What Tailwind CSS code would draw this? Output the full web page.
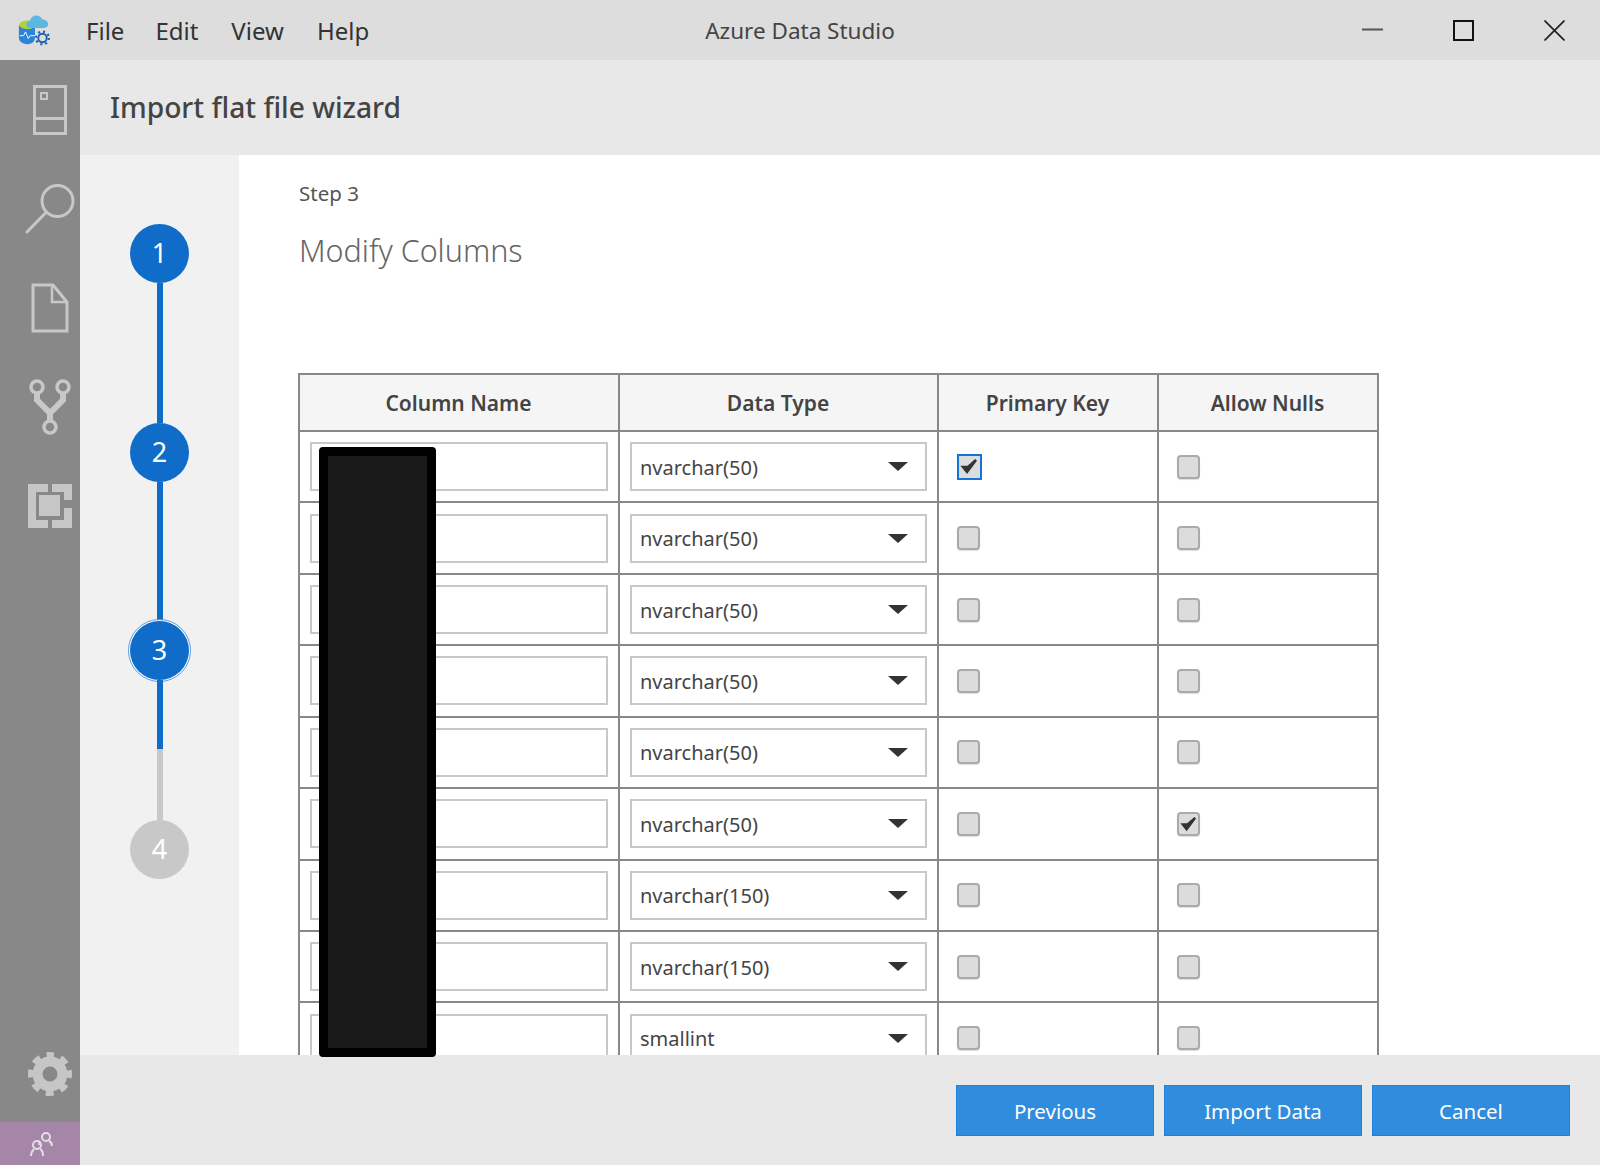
<!DOCTYPE html>
<html lang="en">
<head>
<meta charset="utf-8">
<title>Azure Data Studio</title>
<script src="https://cdn.jsdelivr.net/npm/@tailwindcss/browser@4"></script>
</head>
<body class="m-0 overflow-hidden">
<div class="relative w-[1600px] h-[1165px] flex flex-col overflow-hidden bg-white text-[#444] font-['Noto_Sans',sans-serif]">
  <!-- Title bar -->
  <header class="h-[60px] shrink-0 bg-[#dddddd] flex items-center relative">
    <div class="w-[80px] shrink-0 flex justify-center pr-[12px]">
      <svg width="34" height="36" viewBox="0 0 36 36">
        <path d="M2 14c0-4 4-6 9-6 3 0 5 1 7 2v8H2z" fill="#b4d334"/>
        <path d="M2 13c2 3 5 4 9 4 3 0 6-1 8-3v12c0 5-4 7-8 7s-9-2-9-7z" fill="#2a84d8"/>
        <path d="M3 24h4l2-4 3 7 2-3h5" fill="none" stroke="#fff" stroke-width="1"/>
        <path d="M10 13c-1-3 2-5 4-5 1-4 5-6 8-5 2 0 4 2 5 4 3 0 6 2 6 5s-3 4-6 4H14c-2 0-4-1-4-3z" fill="#5cb8e0"/>
        <circle cx="27" cy="26.5" r="4.5" fill="none" stroke="#1b5fb0" stroke-width="2"/>
        <circle cx="27" cy="26.5" r="6.8" fill="none" stroke="#1b5fb0" stroke-width="2.2" stroke-dasharray="2.2 3.1"/>
      </svg>
    </div>
    <nav class="flex text-[24px] text-[#333] gap-[33px] ml-[6px] pt-[2px]">
      <span class="-mr-[2px]">File</span><span>Edit</span><span>View</span><span>Help</span>
    </nav>
    <div class="absolute left-0 right-0 top-0 h-full pt-[2px] flex items-center justify-center text-[22.5px] text-[#444] pointer-events-none">Azure Data Studio</div>
    <div class="ml-auto flex items-center h-full gap-[70px] pr-[35px] pb-[0px]">
      <svg width="21" height="21" viewBox="0 0 21 21"><path d="M0 9.5h21" stroke="#555" stroke-width="2"/></svg>
      <svg width="21" height="21" viewBox="0 0 21 21"><rect x="1" y="1" width="19" height="19" fill="none" stroke="#111" stroke-width="2"/></svg>
      <svg width="21" height="21" viewBox="0 0 21 21"><path d="M0.5 0.5l20 20M20.5 0.5l-20 20" stroke="#222" stroke-width="1.7"/></svg>
    </div>
  </header>

  <div class="flex-1 flex min-h-0">
    <!-- Activity bar -->
    <aside class="w-[80px] shrink-0 bg-[#888888] flex flex-col">
      <div class="h-[99px] flex items-center justify-center pl-[19px]">
        <svg width="34" height="50" viewBox="0 0 34 50" fill="none" stroke="#c8c8c8" stroke-width="3"><rect x="1.5" y="1.5" width="31" height="47"/><path d="M1.5 33.5h31"/><rect x="8" y="8" width="6" height="6" stroke-width="2"/></svg>
      </div>
      <div class="h-[99px] flex items-center justify-center pl-[19px]">
        <svg width="50" height="50" viewBox="0 0 50 50" fill="none" stroke="#c8c8c8" stroke-width="3"><circle cx="32.5" cy="17" r="15.5"/><path d="M21.5 28L2 48" stroke-linecap="round"/></svg>
      </div>
      <div class="h-[99px] flex items-center justify-center pl-[19px]">
        <svg width="38" height="50" viewBox="0 0 38 50" fill="none" stroke="#c8c8c8" stroke-width="3"><path d="M2 2h20l14 17v29H2z"/><path d="M21 2v17h15" stroke-width="2.5"/></svg>
      </div>
      <div class="h-[99px] flex items-center justify-center pl-[19px]">
        <svg width="42" height="56" viewBox="0 0 42 56" fill="none" stroke="#c8c8c8"><circle cx="8" cy="8" r="6" stroke-width="3.5"/><circle cx="34" cy="8" r="6" stroke-width="3.5"/><circle cx="21" cy="48" r="6" stroke-width="3.5"/><path d="M8 14v7l13 13 13-13v-7M21 34v8" stroke-width="6"/></svg>
      </div>
      <div class="h-[99px] flex items-center justify-center pl-[19px]">
        <svg width="44" height="44" viewBox="0 0 44 44" fill="#c6c6c6"><path d="M0 0h20v8H8v28h12v8H0zM24 0h20v16h-8V8H24zM36 24h8v20H24v-8h12z"/><path d="M11 11h21v21H11z"/></svg>
      </div>
      <div class="mt-auto h-[44px] flex items-start justify-center mb-[26px] pl-[19px]">
        <svg width="44" height="44" viewBox="0 0 44 44" fill="none" stroke="#c6c6c6"><circle cx="22" cy="22" r="12.5" stroke-width="10"/><circle cx="22" cy="22" r="19" stroke-width="6" stroke-dasharray="7.9 7" stroke-dashoffset="3.95" transform="rotate(-90 22 22)"/></svg>
      </div>
      <div class="h-[43px] bg-[#a585a8] flex items-center justify-center pl-[2px]">
        <svg width="24" height="26" viewBox="0 0 24 26" fill="none" stroke="#e4dde6" stroke-width="2"><circle cx="17" cy="6" r="4"/><path d="M11 10c-1 1-1 3-1 4M20 10c2 1 3 3 3 5"/><circle cx="8" cy="14" r="4"/><path d="M2 25c0-4 2-6 3-7M11 18c2 1 3 4 3 7"/></svg>
      </div>
    </aside>

    <div class="flex-1 flex flex-col min-w-0">
      <div class="h-[95px] shrink-0 bg-[#e8e8e8] flex items-center pl-[30px]">
        <h1 class="text-[28.2px] font-medium text-[#444] m-0">Import flat file wizard</h1>
      </div>

      <div class="flex-1 flex min-h-0">
        <!-- Stepper -->
        <div class="w-[159px] shrink-0 bg-[#f1f1f2] flex flex-col items-center pt-[69px]">
          <div class="w-[59px] h-[59px] rounded-full bg-[#0f6cc8] text-white text-[27px] flex items-center justify-center shrink-0">1</div>
          <div class="w-[6px] h-[139.5px] bg-[#0f6cc8] shrink-0"></div>
          <div class="w-[59px] h-[59px] rounded-full bg-[#0f6cc8] text-white text-[27px] flex items-center justify-center shrink-0">2</div>
          <div class="w-[6px] h-[139.5px] bg-[#0f6cc8] shrink-0"></div>
          <div class="w-[59px] h-[59px] rounded-full bg-[#0f6cc8] text-white text-[27px] flex items-center justify-center shrink-0 ring-[1px] ring-white outline-[1px] outline-offset-[1px] outline-[#5a9be0]">3</div>
          <div class="w-[6px] h-[139.5px] shrink-0 flex flex-col"><div class="h-[69px] bg-[#0f6cc8]"></div><div class="flex-1 bg-[#c8c8c8]"></div></div>
          <div class="w-[59px] h-[59px] rounded-full bg-[#c8c8c8] text-white text-[27px] flex items-center justify-center shrink-0">4</div>
        </div>

        <!-- Content -->
        <main class="flex-1 min-w-0 overflow-hidden pl-[60px] bg-white">
          <p class="h-[48px] m-0 pt-[22px] text-[20.5px] leading-[32px] text-[#555]">Step 3</p>
          <h2 class="h-[170px] m-0 pt-[22px] text-[30.5px] font-light leading-[50px] text-[#666]">Modify Columns</h2>

          <div class="w-[1081px] border-2 border-[#888] -ml-[1px]">
            <div class="grid grid-cols-[320px_319px_220px_1fr] h-[57px] bg-[#f5f5f5] border-b-2 border-[#888] text-[21px] font-semibold text-[#444]">
              <div class="flex items-center justify-center pt-[2px] pr-[1px] border-r-2 border-[#888]">Column Name</div>
              <div class="flex items-center justify-center pt-[2px] pr-[1px] border-r-2 border-[#888]">Data Type</div>
              <div class="flex items-center justify-center pt-[2px] pr-[1px] border-r-2 border-[#888]">Primary Key</div>
              <div class="flex items-center justify-center pt-[2px] pr-[1px]">Allow Nulls</div>
            </div>

            <div class="grid grid-cols-[320px_319px_220px_1fr] h-[71.43px] border-b-2 border-[#888] text-[20px] text-[#444]">
              <div class="flex items-center px-[10px] border-r-2 border-[#888]"><div class="w-full h-[49px] border-2 border-[#c8c8c8]"></div></div>
              <div class="flex items-center px-[10px] border-r-2 border-[#888]"><div class="w-full h-[49px] border-2 border-[#c8c8c8] flex items-center pl-[8px] pr-[17px] justify-between"><span class="pt-[2px]">nvarchar(50)</span><span class="w-0 h-0 border-x-[10px] border-x-transparent border-t-[9px] border-t-[#333]"></span></div></div>
              <div class="flex items-center pl-[18px] border-r-2 border-[#888]"><div class="w-[25px] h-[26px] border-2 border-[#1572d8] bg-[#dcdcdc] flex items-center justify-center"><svg width="19" height="19" viewBox="0 0 19 19"><path d="M3 10l4 5 9-12-8 7z" fill="#333" stroke="#333" stroke-width="2.5"/></svg></div></div>
              <div class="flex items-center pl-[18px]"><div class="w-[23px] h-[24px] rounded-[4px] border-2 border-[#aaa] bg-[#dcdcdc] shadow-[0_1px_1px_#ddd]"></div></div>
            </div>
            <div class="grid grid-cols-[320px_319px_220px_1fr] h-[71.43px] border-b-2 border-[#888] text-[20px] text-[#444]">
              <div class="flex items-center px-[10px] border-r-2 border-[#888]"><div class="w-full h-[49px] border-2 border-[#c8c8c8]"></div></div>
              <div class="flex items-center px-[10px] border-r-2 border-[#888]"><div class="w-full h-[49px] border-2 border-[#c8c8c8] flex items-center pl-[8px] pr-[17px] justify-between"><span class="pt-[2px]">nvarchar(50)</span><span class="w-0 h-0 border-x-[10px] border-x-transparent border-t-[9px] border-t-[#333]"></span></div></div>
              <div class="flex items-center pl-[18px] border-r-2 border-[#888]"><div class="w-[23px] h-[24px] rounded-[4px] border-2 border-[#aaa] bg-[#dcdcdc] shadow-[0_1px_1px_#ddd]"></div></div>
              <div class="flex items-center pl-[18px]"><div class="w-[23px] h-[24px] rounded-[4px] border-2 border-[#aaa] bg-[#dcdcdc] shadow-[0_1px_1px_#ddd]"></div></div>
            </div>
            <div class="grid grid-cols-[320px_319px_220px_1fr] h-[71.43px] border-b-2 border-[#888] text-[20px] text-[#444]">
              <div class="flex items-center px-[10px] border-r-2 border-[#888]"><div class="w-full h-[49px] border-2 border-[#c8c8c8]"></div></div>
              <div class="flex items-center px-[10px] border-r-2 border-[#888]"><div class="w-full h-[49px] border-2 border-[#c8c8c8] flex items-center pl-[8px] pr-[17px] justify-between"><span class="pt-[2px]">nvarchar(50)</span><span class="w-0 h-0 border-x-[10px] border-x-transparent border-t-[9px] border-t-[#333]"></span></div></div>
              <div class="flex items-center pl-[18px] border-r-2 border-[#888]"><div class="w-[23px] h-[24px] rounded-[4px] border-2 border-[#aaa] bg-[#dcdcdc] shadow-[0_1px_1px_#ddd]"></div></div>
              <div class="flex items-center pl-[18px]"><div class="w-[23px] h-[24px] rounded-[4px] border-2 border-[#aaa] bg-[#dcdcdc] shadow-[0_1px_1px_#ddd]"></div></div>
            </div>
            <div class="grid grid-cols-[320px_319px_220px_1fr] h-[71.43px] border-b-2 border-[#888] text-[20px] text-[#444]">
              <div class="flex items-center px-[10px] border-r-2 border-[#888]"><div class="w-full h-[49px] border-2 border-[#c8c8c8]"></div></div>
              <div class="flex items-center px-[10px] border-r-2 border-[#888]"><div class="w-full h-[49px] border-2 border-[#c8c8c8] flex items-center pl-[8px] pr-[17px] justify-between"><span class="pt-[2px]">nvarchar(50)</span><span class="w-0 h-0 border-x-[10px] border-x-transparent border-t-[9px] border-t-[#333]"></span></div></div>
              <div class="flex items-center pl-[18px] border-r-2 border-[#888]"><div class="w-[23px] h-[24px] rounded-[4px] border-2 border-[#aaa] bg-[#dcdcdc] shadow-[0_1px_1px_#ddd]"></div></div>
              <div class="flex items-center pl-[18px]"><div class="w-[23px] h-[24px] rounded-[4px] border-2 border-[#aaa] bg-[#dcdcdc] shadow-[0_1px_1px_#ddd]"></div></div>
            </div>
            <div class="grid grid-cols-[320px_319px_220px_1fr] h-[71.43px] border-b-2 border-[#888] text-[20px] text-[#444]">
              <div class="flex items-center px-[10px] border-r-2 border-[#888]"><div class="w-full h-[49px] border-2 border-[#c8c8c8]"></div></div>
              <div class="flex items-center px-[10px] border-r-2 border-[#888]"><div class="w-full h-[49px] border-2 border-[#c8c8c8] flex items-center pl-[8px] pr-[17px] justify-between"><span class="pt-[2px]">nvarchar(50)</span><span class="w-0 h-0 border-x-[10px] border-x-transparent border-t-[9px] border-t-[#333]"></span></div></div>
              <div class="flex items-center pl-[18px] border-r-2 border-[#888]"><div class="w-[23px] h-[24px] rounded-[4px] border-2 border-[#aaa] bg-[#dcdcdc] shadow-[0_1px_1px_#ddd]"></div></div>
              <div class="flex items-center pl-[18px]"><div class="w-[23px] h-[24px] rounded-[4px] border-2 border-[#aaa] bg-[#dcdcdc] shadow-[0_1px_1px_#ddd]"></div></div>
            </div>
            <div class="grid grid-cols-[320px_319px_220px_1fr] h-[71.43px] border-b-2 border-[#888] text-[20px] text-[#444]">
              <div class="flex items-center px-[10px] border-r-2 border-[#888]"><div class="w-full h-[49px] border-2 border-[#c8c8c8]"></div></div>
              <div class="flex items-center px-[10px] border-r-2 border-[#888]"><div class="w-full h-[49px] border-2 border-[#c8c8c8] flex items-center pl-[8px] pr-[17px] justify-between"><span class="pt-[2px]">nvarchar(50)</span><span class="w-0 h-0 border-x-[10px] border-x-transparent border-t-[9px] border-t-[#333]"></span></div></div>
              <div class="flex items-center pl-[18px] border-r-2 border-[#888]"><div class="w-[23px] h-[24px] rounded-[4px] border-2 border-[#aaa] bg-[#dcdcdc] shadow-[0_1px_1px_#ddd]"></div></div>
              <div class="flex items-center pl-[18px]"><div class="w-[23px] h-[24px] rounded-[4px] border-2 border-[#aaa] bg-[#dcdcdc] shadow-[0_1px_1px_#ddd] flex items-center justify-center"><svg width="18" height="18" viewBox="0 0 19 19"><path d="M3 10l4 5 9-12-8 7z" fill="#333" stroke="#333" stroke-width="2.5"/></svg></div></div>
            </div>
            <div class="grid grid-cols-[320px_319px_220px_1fr] h-[71.43px] border-b-2 border-[#888] text-[20px] text-[#444]">
              <div class="flex items-center px-[10px] border-r-2 border-[#888]"><div class="w-full h-[49px] border-2 border-[#c8c8c8]"></div></div>
              <div class="flex items-center px-[10px] border-r-2 border-[#888]"><div class="w-full h-[49px] border-2 border-[#c8c8c8] flex items-center pl-[8px] pr-[17px] justify-between"><span class="pt-[2px]">nvarchar(150)</span><span class="w-0 h-0 border-x-[10px] border-x-transparent border-t-[9px] border-t-[#333]"></span></div></div>
              <div class="flex items-center pl-[18px] border-r-2 border-[#888]"><div class="w-[23px] h-[24px] rounded-[4px] border-2 border-[#aaa] bg-[#dcdcdc] shadow-[0_1px_1px_#ddd]"></div></div>
              <div class="flex items-center pl-[18px]"><div class="w-[23px] h-[24px] rounded-[4px] border-2 border-[#aaa] bg-[#dcdcdc] shadow-[0_1px_1px_#ddd]"></div></div>
            </div>
            <div class="grid grid-cols-[320px_319px_220px_1fr] h-[71.43px] border-b-2 border-[#888] text-[20px] text-[#444]">
              <div class="flex items-center px-[10px] border-r-2 border-[#888]"><div class="w-full h-[49px] border-2 border-[#c8c8c8]"></div></div>
              <div class="flex items-center px-[10px] border-r-2 border-[#888]"><div class="w-full h-[49px] border-2 border-[#c8c8c8] flex items-center pl-[8px] pr-[17px] justify-between"><span class="pt-[2px]">nvarchar(150)</span><span class="w-0 h-0 border-x-[10px] border-x-transparent border-t-[9px] border-t-[#333]"></span></div></div>
              <div class="flex items-center pl-[18px] border-r-2 border-[#888]"><div class="w-[23px] h-[24px] rounded-[4px] border-2 border-[#aaa] bg-[#dcdcdc] shadow-[0_1px_1px_#ddd]"></div></div>
              <div class="flex items-center pl-[18px]"><div class="w-[23px] h-[24px] rounded-[4px] border-2 border-[#aaa] bg-[#dcdcdc] shadow-[0_1px_1px_#ddd]"></div></div>
            </div>
            <div class="grid grid-cols-[320px_319px_220px_1fr] h-[71.43px] border-b-2 border-[#888] text-[20px] text-[#444]">
              <div class="flex items-center px-[10px] border-r-2 border-[#888]"><div class="w-full h-[49px] border-2 border-[#c8c8c8]"></div></div>
              <div class="flex items-center px-[10px] border-r-2 border-[#888]"><div class="w-full h-[49px] border-2 border-[#c8c8c8] flex items-center pl-[8px] pr-[17px] justify-between"><span class="pt-[2px]">smallint</span><span class="w-0 h-0 border-x-[10px] border-x-transparent border-t-[9px] border-t-[#333]"></span></div></div>
              <div class="flex items-center pl-[18px] border-r-2 border-[#888]"><div class="w-[23px] h-[24px] rounded-[4px] border-2 border-[#aaa] bg-[#dcdcdc] shadow-[0_1px_1px_#ddd]"></div></div>
              <div class="flex items-center pl-[18px]"><div class="w-[23px] h-[24px] rounded-[4px] border-2 border-[#aaa] bg-[#dcdcdc] shadow-[0_1px_1px_#ddd]"></div></div>
            </div>
          </div>
        </main>
      </div>

      <footer class="h-[110px] shrink-0 bg-[#e8e8e8] flex items-start justify-end gap-[10px] pt-[30px] pr-[30px] text-[20.5px] text-white">
        <button class="w-[198px] h-[51px] bg-[#308cdc] border border-[#1a83dc] pt-[1px]">Previous</button>
        <button class="w-[198px] h-[51px] bg-[#308cdc] border border-[#1a83dc] pt-[1px]">Import Data</button>
        <button class="w-[198px] h-[51px] bg-[#308cdc] border border-[#1a83dc] pt-[1px]">Cancel</button>
      </footer>
    </div>
  </div>

  <!-- Redaction block over the column-name cells -->
  <div class="absolute left-[319px] top-[447px] w-[117px] h-[610px] bg-[#1a1a1a] border-[9px] border-black rounded-[4px]"></div>
</div>
</body>
</html>
